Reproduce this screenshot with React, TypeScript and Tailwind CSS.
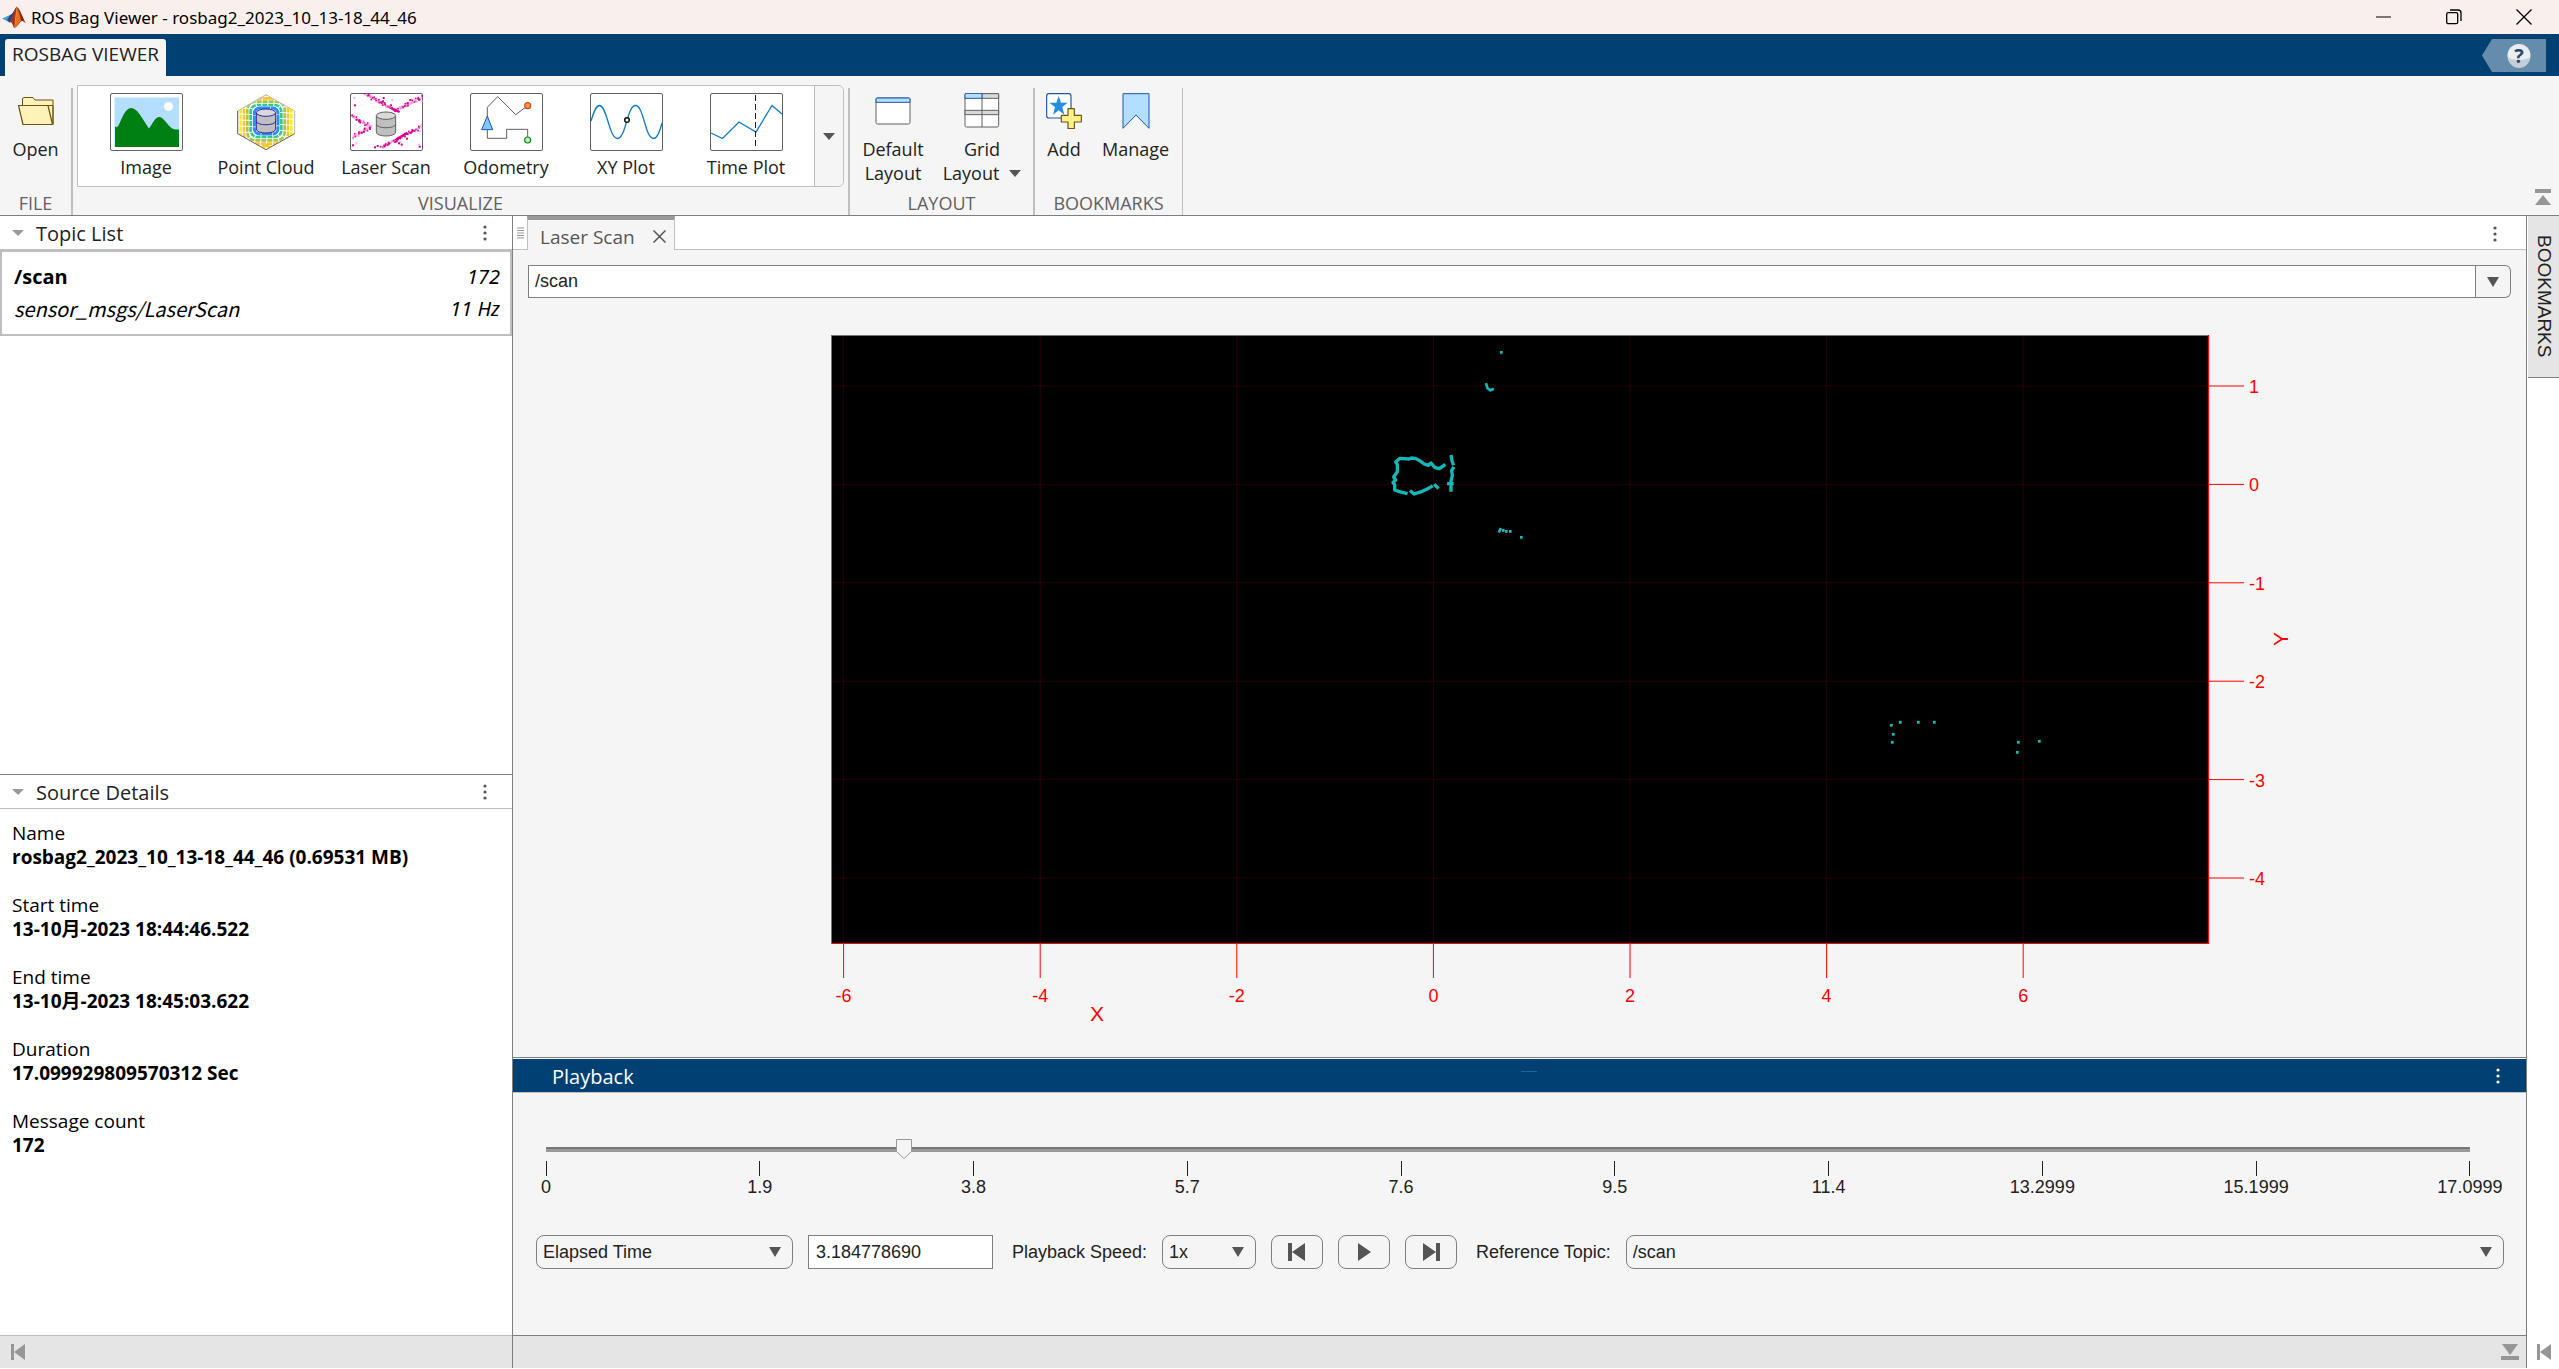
import React, { useState } from "react";

const GALLERY = [
  { label: "Image", Icon: ImageIcon },
  { label: "Point Cloud", Icon: PointCloudIcon },
  { label: "Laser Scan", Icon: LaserScanIcon },
  { label: "Odometry", Icon: OdometryIcon },
  { label: "XY Plot", Icon: XYPlotIcon },
  { label: "Time Plot", Icon: TimePlotIcon },
];

const DETAILS = [
  ["Name", "rosbag2_2023_10_13-18_44_46 (0.69531 MB)"],
  ["Start time", "13-10月-2023 18:44:46.522"],
  ["End time", "13-10月-2023 18:45:03.622"],
  ["Duration", "17.099929809570312 Sec"],
  ["Message count", "172"],
];

const TICKS = ["0", "1.9", "3.8", "5.7", "7.6", "9.5", "11.4", "13.2999", "15.1999", "17.0999"];
const DURATION = 17.0999;

// cheap repeatable noise for the scattered dots in the laser icon
const noise = (n: number) => {
  const v = Math.sin(n * 12.9898) * 43758.5453;
  return v - Math.floor(v);
};

function Frame({ x = 0, y = 0, w = 73, h = 58, sw = 1 }) {
  return (
    <rect
      x={x + sw / 2}
      y={y + sw / 2}
      width={w - sw}
      height={h - sw}
      rx={sw * 1.5}
      fill="#fff"
      stroke="#616161"
      strokeWidth={sw}
    />
  );
}

function ImageIcon() {
  return (
    <svg viewBox="0 0 73 58" className="h-[58px] w-[73px]">
      <Frame />
      <path d="M4.5 4.5h64.500v49.500h-64.500z" fill="#b3deff" />
      <circle cx="58.500" cy="13.500" r="4.600" fill="#fff" />
      <path
        d="M5 33c1.500 2 2.500 1.500 4-1.500C12 25 15.500 15 21 15c6.500 0 10.500 9.500 18 20.500C43 30 45 24 49.500 24c5 0 9.500 12.500 16 12.500H69V54H5z"
        fill="#007f12"
      />
    </svg>
  );
}

function Database({ cx, cy, stroke }: { cx: number; cy: number; stroke: string }) {
  const l = cx - 29;
  const r = cx + 29;
  const t = cy - 25;
  const b = cy + 24;
  return (
    <g stroke={stroke} strokeWidth="3">
      <path d={`M${l} ${t}V${b}C${l} ${b + 16} ${r} ${b + 16} ${r} ${b}V${t}`} fill="#bfbfbf" />
      <ellipse cx={cx} cy={t} rx="29" ry="11" fill="#d9d9d9" />
      <path d={`M${l} ${cy}C${l} ${cy + 15} ${r} ${cy + 15} ${r} ${cy}`} fill="none" />
    </g>
  );
}

function PointCloudIcon() {
  const rings = [
    { dx: 76, color: "#f7f01e" },
    { dx: 66, color: "#fdc13a" },
    { dx: 56, color: "#a8c83a" },
    { dx: 46, color: "#35c795" },
  ];
  const hex = "22,75 107,26 193,75 193,143 107,191 22,143";
  return (
    <svg viewBox="-1 21 219 174" className="h-[58px] w-[73px]">
      <clipPath id="hex">
        <polygon points={hex} />
      </clipPath>
      <polygon points={hex} fill="#fff" />
      <g clipPath="url(#hex)" fill="none" strokeWidth="8">
        {rings.map(({ dx, color }, i) => (
          <rect
            key={dx}
            x={107 - dx}
            y={105 - dx - 2}
            width={dx * 2}
            height={dx * 2 + 4}
            rx={20 + (3 - i) * 4}
            stroke={color}
            strokeDasharray="15 3"
            strokeDashoffset={i * 7}
          />
        ))}
        <path d="M97 37h20M97 178h20" stroke="#fdc13a" />
        <rect x="72" y="66" width="71" height="78" rx="16" stroke="#2b8cf5" strokeWidth="9" strokeDasharray="32 2" />
      </g>
      <path d="M22 143V75L107 26l86 49v68" fill="none" stroke="#b8b8b8" strokeWidth="3" />
      <path d="M22 75v68l85 48 86-48" fill="none" stroke="#616161" strokeWidth="3" />
      <Database cx={107} cy={105} stroke="#38219c" />
    </svg>
  );
}

function LaserScanIcon() {
  const walls = [
    [405, 26, 495, 74, 34],
    [495, 74, 572, 36, 26],
    [364, 92, 420, 122, 24],
    [420, 122, 364, 156, 22],
    [452, 184, 572, 122, 52],
  ];
  const stray = [
    [370, 36], [372, 58], [458, 36], [484, 42], [538, 42], [530, 52], [572, 46], [480, 58], [566, 182], [564, 176],
    [432, 184], [440, 180], [508, 168], [512, 176], [504, 172], [376, 172], [366, 178], [528, 158], [568, 136], [456, 46],
  ];
  return (
    <svg viewBox="357 21 219 174" className="h-[58px] w-[73px]">
      <Frame x={357} y={21} w={219} h={174} sw={3} />
      {walls.map(([x1, y1, x2, y2, n], w) => (
        <g key={w}>
          <path d={`M${x1} ${y1}L${x2} ${y2}`} stroke="#f08fd0" strokeWidth="6" strokeDasharray="9 3" />
          {Array.from({ length: n }, (_, i) => {
            const t = i / (n - 1);
            const s = w * 100 + i;
            return (
              <rect
                key={i}
                x={x1 + (x2 - x1) * t + (noise(s) - 0.5) * 8 - 3}
                y={y1 + (y2 - y1) * t + (noise(s + 0.5) - 0.5) * 12 - 3}
                width="5"
                height="5"
                fill={noise(s + 0.25) > 0.3 ? "#d8008c" : "#ffa3df"}
              />
            );
          })}
        </g>
      ))}
      <path d="M482 68l24 10M496 160l34-20" stroke="#d8008c" strokeWidth="7" />
      {stray.map(([x, y], i) => (
        <rect key={i} x={x - 3} y={y - 3} width="6" height="6" fill={i % 3 ? "#d8008c" : "#ffb3e6"} />
      ))}
      <Database cx={465} cy={114} stroke="#616161" />
    </svg>
  );
}

function OdometryIcon() {
  return (
    <svg viewBox="717 21 219 174" className="h-[58px] w-[73px]">
      <Frame x={717} y={21} w={219} h={174} sw={3} />
      <path d="M769 110V64l31-32 54 54 36-27M769 130v27h58v-27h63v24" fill="none" stroke="#616161" strokeWidth="3" />
      <path d="M769 90l16 41h-33z" fill="#80c8ff" stroke="#1a56a8" strokeWidth="3" />
      <circle cx="890" cy="59" r="9" fill="#ff9355" stroke="#d9480f" strokeWidth="3.500" />
      <circle cx="890" cy="162" r="9" fill="#b8f5b8" stroke="#12801a" strokeWidth="3.500" />
    </svg>
  );
}

function XYPlotIcon() {
  return (
    <svg viewBox="0 0 73 58" className="h-[58px] w-[73px]">
      <Frame />
      <path
        d="M1 28C4 18 6 12.500 9.500 12.500 17 12.500 19 45.500 27.500 45.500S37 12.500 45.500 12.500 55 45.500 63.500 45.500C67 45.500 70 38 72 30"
        fill="none"
        stroke="#0f7bc4"
        strokeWidth="1.300"
      />
      <circle cx="37" cy="27" r="2.300" fill="#fff" stroke="#111" strokeWidth="1.500" />
    </svg>
  );
}

function TimePlotIcon() {
  return (
    <svg viewBox="0 0 73 58" className="h-[58px] w-[73px]">
      <Frame />
      <path d="M1 40l11.500 5.500L29 29l17 10L62 12.500 72 21" fill="none" stroke="#0f7bc4" strokeWidth="1.300" />
      <path d="M45.500 2v54" stroke="#222" strokeDasharray="6 3" />
    </svg>
  );
}

function FolderIcon() {
  return (
    <svg viewBox="0 0 36 36" className="size-9" fill="#fff2b8" stroke="#6b5310" strokeLinejoin="round">
      <path d="M4.500 12V5.500l1.500-1h9l2 2.500h18v24.500h-3z" />
      <path d="M.500 12.500h29.500l4.500 19H5z" strokeWidth="1.200" />
      <path d="M30 12.500h5v19" fill="none" />
    </svg>
  );
}

function DefaultLayoutIcon() {
  return (
    <svg viewBox="43 21 108 108" className="size-9" strokeWidth="3">
      <rect x="46" y="36" width="102" height="78" rx="5" fill="#fff" stroke="#616161" />
      <path d="M46 49V39q0-3 3-3h96q3 0 3 3v10z" fill="#b3deff" stroke="#1a56a8" />
    </svg>
  );
}

function GridLayoutIcon() {
  return (
    <svg viewBox="307 21 108 108" className="size-9" strokeWidth="3">
      <rect x="310" y="22" width="101" height="101" rx="5" fill="#fff" stroke="#616161" />
      <path d="M361 23h50v14h-50zM310 73h101v13H310z" fill="#d9d9d9" stroke="#616161" />
      <path d="M361 37v86" stroke="#616161" />
      <path d="M310 37V25q0-3 3-3h48v15z" fill="#b3deff" stroke="#1a56a8" />
    </svg>
  );
}

function AddBookmarkIcon() {
  return (
    <svg viewBox="555 21 108 108" className="size-9" strokeWidth="3.500">
      <rect x="557" y="23" width="73" height="73" rx="7" fill="#fff" stroke="#1a56a8" />
      <path d="M593 30l7 20h20l-16 13 6 23-17-13-17 13 6-23-17-13h21z" fill="#268ce0" />
      <path d="M621 68h19v20h21v20h-21v20h-19v-20h-20V88h20z" fill="#fff08c" stroke="#6b5310" strokeLinejoin="round" />
    </svg>
  );
}

function ManageIcon() {
  return (
    <svg viewBox="768 21 108 108" className="size-9">
      <path d="M783 23h78v104l-39-40-39 40z" fill="#b3deff" stroke="#1a56a8" strokeWidth="3" />
    </svg>
  );
}

function MatlabLogo() {
  return (
    <svg viewBox="0 0 24 24" className="size-6" aria-hidden="true">
      <path d="M0 13.500L8 10l4 3.500-4.500 4z" fill="#4a9fd8" />
      <path d="M8 10c3-1 4-5 6.500-8L12 14l-4.500 3.500L5 15z" fill="#1d4f86" />
      <path d="M14.500 1.500C12 5 11 12 7.500 17.500c2.500-1 3 2 4.500 5.500 4-1 6-7 8-7z" fill="#a8301a" />
      <path d="M14.500 1.500C13.500 8 13 16 12 23c3-1 5-6 7-7 2-.500 3 .500 5 2.500C20 12 17.500 2.500 14.500 1.500z" fill="#e2701c" />
      <path d="M15 2.500c2 4 3.500 9 4 13.500 1.500-.500 3 .500 5 2.500C20 12 18 3.500 15 2.500z" fill="#8f1f12" />
      <path d="M14.500 2c-.500 7-1 13-1.500 18 1-4 1.500-12 1.500-18z" fill="#fbc36a" />
    </svg>
  );
}

function Caret({ className = "h-[7px] w-3" }) {
  return (
    <svg viewBox="0 0 12 10" preserveAspectRatio="none" className={className} aria-hidden="true">
      <path d="M0 0h12L6 10z" fill="currentColor" />
    </svg>
  );
}

function Kebab({ label, className = "text-[#555]" }: { label: string; className?: string }) {
  return (
    <button type="button" aria-label={label} className={`flex h-6 w-4 items-center justify-center ${className}`}>
      <svg viewBox="0 0 4 16" className="h-4 w-1" fill="currentColor">
        <circle cx="2" cy="2" r="1.600" />
        <circle cx="2" cy="8" r="1.600" />
        <circle cx="2" cy="14" r="1.600" />
      </svg>
    </button>
  );
}

// bar + triangle, used for every "collapse towards this edge" button
function Collapse({ label, dir }: { label: string; dir: "up" | "down" | "left" }) {
  const d = {
    up: "M0 0h16v4H0zM8 6l8 10H0z",
    down: "M0 12h18v4H0zM1 0h16L9 11z",
    left: "M0 0h3v16H0zM3 8L14 0v16z",
  }[dir];
  return (
    <button type="button" aria-label={label} className="text-[#969696]">
      <svg viewBox="0 0 18 16" className="h-4 w-[18px]" fill="currentColor">
        <path d={d} />
      </svg>
    </button>
  );
}

function TitleBar() {
  return (
    <header className="flex h-[34px] shrink-0 items-center bg-[#f9f0ed] pl-[2px] text-black">
      <MatlabLogo />
      <h1 className="ml-[5px] flex-1 pt-px font-['Noto_Sans',sans-serif] text-[17px]">
        ROS Bag Viewer - rosbag2_2023_10_13-18_44_46
      </h1>
      <button type="button" aria-label="Minimize" className="flex w-[70px] justify-center">
        <svg viewBox="0 0 16 16" className="size-4">
          <path d="M0 8h15" stroke="#000" />
        </svg>
      </button>
      <button type="button" aria-label="Restore" className="flex w-[70px] justify-center">
        <svg viewBox="0 0 16 16" className="size-4" fill="none" stroke="#000" strokeWidth="1.300">
          <rect x=".7" y="3.700" width="11" height="11" rx="1.500" />
          <path d="M4 1h8q3 0 3 3v8" />
        </svg>
      </button>
      <button type="button" aria-label="Close" className="flex w-[70px] justify-center">
        <svg viewBox="0 0 16 16" className="size-4">
          <path d="M.500 .500l15 15M15.500 .500l-15 15" stroke="#000" strokeWidth="1.300" />
        </svg>
      </button>
    </header>
  );
}

function TabStrip() {
  return (
    <nav className="flex h-[42px] shrink-0 items-end justify-between bg-[#004073] pl-[5px] pr-[13px]">
      <button type="button" className="h-[37px] rounded-t-[3px] bg-[#f5f5f5] px-[7px] pb-[6px] text-[19px] text-[#222]">
        ROSBAG VIEWER
      </button>
      <button type="button" aria-label="Help" className="mb-1">
        <svg viewBox="0 0 64 33" className="h-[33px] w-16">
          <path d="M0 16.500L10 0h54v33H10z" fill="#668cab" />
          <circle cx="37" cy="16.500" r="11.500" fill="#e9eef3" />
          <path d="M26 18a11 11 0 0 0 22 0c-4 4-18 4-22 0z" fill="#c3ced8" />
          <text x="37" y="24" textAnchor="middle" fontSize="20" fontWeight="700" fill="#2f4b66">
            ?
          </text>
        </svg>
      </button>
    </nav>
  );
}

function SectionTitle({ children }: { children: React.ReactNode }) {
  return <h2 className="h-6 text-center leading-6 text-[#616161]">{children}</h2>;
}

function ToolButton({ icon, className, children }: { icon: React.ReactNode; className: string; children: React.ReactNode }) {
  return (
    <button type="button" className={`flex flex-col items-center leading-6 ${className}`}>
      {icon}
      <span className="mt-2 block">{children}</span>
    </button>
  );
}

function Toolstrip() {
  return (
    <div className="flex h-[140px] shrink-0 border-b border-[#7f7f7f] bg-[#f5f5f5] text-[18px] text-[#222]">
      <section className="flex w-[71px] flex-col">
        <div className="flex flex-1 items-start justify-center pt-[17px]">
          <ToolButton icon={<FolderIcon />} className="w-14">
            Open
          </ToolButton>
        </div>
        <SectionTitle>FILE</SectionTitle>
      </section>
      <div className="mt-3 w-[2px] bg-[#bfbfbf]" />

      <section className="flex flex-col px-1 pt-[9px]">
        <div className="flex h-[102px] rounded-r-md border border-[#bfbfbf] bg-white">
          <div className="flex px-2">
            {GALLERY.map(({ label, Icon }) => (
              <button key={label} type="button" className="flex w-[120px] flex-col items-center gap-1 pt-[7px] leading-6">
                <Icon />
                {label}
              </button>
            ))}
          </div>
          <button
            type="button"
            aria-label="More plots"
            className="flex w-[29px] items-center justify-center rounded-r-md border-l border-[#bfbfbf] bg-[#f5f5f5] text-[#555]"
          >
            <Caret />
          </button>
        </div>
        <div className="flex-1" />
        <SectionTitle>VISUALIZE</SectionTitle>
      </section>
      <div className="mt-3 w-[2px] bg-[#bfbfbf]" />

      <section className="flex flex-col">
        <div className="flex flex-1 items-start gap-[19px] px-3 pt-[17px]">
          <ToolButton icon={<DefaultLayoutIcon />} className="w-[62px]">
            Default Layout
          </ToolButton>
          <ToolButton icon={<GridLayoutIcon />} className="w-[78px]">
            Grid
            <span className="flex items-center gap-[10px]">
              Layout <Caret className="h-[7px] w-3 text-[#555]" />
            </span>
          </ToolButton>
        </div>
        <SectionTitle>LAYOUT</SectionTitle>
      </section>
      <div className="mt-3 w-[2px] bg-[#bfbfbf]" />

      <section className="flex flex-col">
        <div className="flex flex-1 items-start gap-[19px] pl-[11px] pr-3 pt-[17px]">
          <ToolButton icon={<AddBookmarkIcon />} className="w-9">
            Add
          </ToolButton>
          <ToolButton icon={<ManageIcon />} className="w-[69px]">
            Manage
          </ToolButton>
        </div>
        <SectionTitle>BOOKMARKS</SectionTitle>
      </section>
      <div className="mt-3 w-px bg-[#bfbfbf]" />

      <div className="ml-auto self-end pb-[3px] pr-[6px]">
        <Collapse label="Collapse toolstrip" dir="up" />
      </div>
    </div>
  );
}

function PanelHeader({ title }: { title: string }) {
  return (
    <div className="flex h-[34px] shrink-0 items-center border-b border-[#bfbfbf] pl-3 pr-[19px]">
      <Caret className="h-[6px] w-3 text-[#999]" />
      <h2 className="ml-3 flex-1 pt-[2px] text-[20px] text-[#222]">{title}</h2>
      <Kebab label={`${title} options`} />
    </div>
  );
}

function Sidebar() {
  return (
    <aside className="flex w-[513px] shrink-0 flex-col border-r border-[#7f7f7f] bg-white">
      <section className="min-h-0 flex-1">
        <PanelHeader title="Topic List" />
        <button
          type="button"
          className="grid w-full grid-cols-[1fr_auto] border-2 border-[#bfbfbf] pb-[9px] pl-3 pr-[10px] pt-[9px] text-left text-[20px] leading-8 text-black"
        >
          <span className="font-bold">/scan</span>
          <span className="text-right font-['Noto_Sans',sans-serif] italic">172</span>
          <span className="font-['Noto_Sans_CJK_SC',sans-serif] italic">sensor_msgs/LaserScan</span>
          <span className="text-right font-['Noto_Sans',sans-serif] italic">11 Hz</span>
        </button>
      </section>

      <section className="h-[561px] shrink-0 border-t border-[#7f7f7f]">
        <PanelHeader title="Source Details" />
        <dl className="flex flex-col gap-6 px-3 pt-3 text-[19px] leading-6 text-black">
          {DETAILS.map(([term, value]) => (
            <div key={term}>
              <dt>{term}</dt>
              <dd className="font-bold">{value}</dd>
            </div>
          ))}
        </dl>
      </section>

      <div className="flex h-[33px] shrink-0 items-center border-t border-[#bfbfbf] bg-[#e5e5e5] pl-[11px]">
        <Collapse label="Collapse left panel" dir="left" />
      </div>
    </aside>
  );
}

const px = (v: number) => 920.4 + 98.3 * v;
const py = (v: number) => 176.4 - 98.4 * v;

const FAR_POINTS = [
  [1378.3, 417.3], [1387.3, 414.3], [1405.3, 414.3], [1421.3, 414.3], [1380.3, 426.3],
  [1379.3, 434.3], [1505.3, 434.3], [1526.3, 433.3], [1504.3, 444.3],
];

function ScanPlot() {
  return (
    <svg
      viewBox="0 0 2013 749"
      className="mt-[10px] min-h-0 w-full flex-1 font-['Liberation_Sans',Arial,sans-serif]"
      role="img"
      aria-label="Laser scan plot"
    >
      <rect x="318.500" y="27.500" width="1377" height="608" fill="#000" stroke="#777" />
      <g stroke="#2b0000">
        {[-6, -4, -2, 0, 2, 4, 6].map((v) => (
          <path key={v} d={`M${px(v)} 28V635`} />
        ))}
        {[1, 0, -1, -2, -3, -4].map((v) => (
          <path key={v} d={`M319 ${py(v)}H1695`} />
        ))}
      </g>
      <path d="M319 635.500H1695.500V27" fill="none" stroke="#f00" strokeWidth="1.200" />
      <g fill="#f00" fontSize="18">
        {[-6, -4, -2, 0, 2, 4, 6].map((v) => (
          <g key={v}>
            <path d={`M${px(v)} 636V670`} stroke="#f00" />
            <text x={px(v)} y="694" textAnchor="middle">
              {v}
            </text>
          </g>
        ))}
        {[1, 0, -1, -2, -3, -4].map((v) => (
          <g key={v}>
            <path d={`M1696 ${py(v)}H1731`} stroke="#f00" />
            <text x="1736" y={py(v) + 7}>
              {v}
            </text>
          </g>
        ))}
      </g>
      <g fill="#f00" fontSize="21">
        <text x="584" y="713" textAnchor="middle">
          X
        </text>
        <text transform="translate(1775 331) rotate(-90)" textAnchor="middle">
          Y
        </text>
      </g>
      <g
        transform="translate(847 22) scale(.3333)"
        fill="none"
        stroke="#14b8b8"
        strokeWidth="10"
        strokeLinejoin="round"
        strokeLinecap="square"
      >
        <path d="M252 406L238 416L225 413L213 399L205 406L193 402L182 394L168 386L154 384L147 387L120 385L107 396L112 404V425L101 441L107 450L99 458L104 464V480L118 485L138 490" />
        <path d="M154 485L162 492L178 487M187 484L200 478L214 470M226 466L232 472" />
        <path d="M274 380L276 392L279 401M279 415L275 422L277 436L273 454V480M266 461H276" />
        <path d="M379 163L382 174L391 181L398 178" strokeWidth="8" />
        <path d="M418 604L421 598M430 601h.1M439 604h.1M451 604h.1M484 622h.1M424 67h.1" strokeWidth="8" />
      </g>
      {FAR_POINTS.map(([x, y]) => (
        <rect key={`${x},${y}`} x={x - 1.4} y={y - 1.4} width="2.800" height="2.800" fill="#14b8b8" />
      ))}
    </svg>
  );
}

function Select({ id, label, options, className }: { id: string; label?: string; options: string[]; className: string }) {
  return (
    <div className={`relative ${className}`}>
      <select
        id={id}
        aria-label={label}
        className="h-[34px] w-full appearance-none rounded-lg border border-[#7f7f7f] bg-[#f5f5f5] pl-[6px] text-[18px] text-[#222]"
      >
        {options.map((o) => (
          <option key={o}>{o}</option>
        ))}
      </select>
      <Caret className="pointer-events-none absolute right-3 top-3 h-[10px] w-3 text-[#555]" />
    </div>
  );
}

function StepButton({ label, d }: { label: string; d: string }) {
  return (
    <button
      type="button"
      aria-label={label}
      className="flex h-[34px] w-[52px] items-center justify-center rounded-lg border border-[#7f7f7f]"
    >
      <svg viewBox="0 0 18 18" className="size-[18px]" fill="#555">
        <path d={d} />
      </svg>
    </button>
  );
}

function Playback() {
  const [time, setTime] = useState(3.18477869);
  return (
    <section className="shrink-0 border-t border-[#7f7f7f] pt-px">
      <div className="flex h-[34px] items-center border-b border-[#bfbfbf] bg-[#004073] pl-[39px] pr-5 text-white">
        <h2 className="flex-1 pt-[2px] text-[20px]">Playback</h2>
        <div className="mb-2 h-px w-4 bg-[#2c6491]" />
        <div className="flex flex-1 justify-end">
          <Kebab label="Playback options" className="text-white" />
        </div>
      </div>
      <div className="h-[242px] pt-[46px] font-['Liberation_Sans',Arial,sans-serif] text-[18px] text-[#222]">
        <div className="ml-[33px] mr-14">
          <div className="relative flex h-5 items-center">
            <div className="h-[5px] w-full border-t-2 border-[#777] bg-[#999]" />
            <svg
              viewBox="0 0 16 20"
              className="absolute h-5 w-4 -translate-x-1/2"
              style={{ left: `${(time / DURATION) * 100}%` }}
            >
              <path d="M.500 .500h15v12L8 19.500.500 12.500z" fill="#f5f5f5" stroke="#999" />
            </svg>
            <input
              type="range"
              aria-label="Playback position"
              min={0}
              max={DURATION}
              step="any"
              value={time}
              onChange={(e) => setTime(Number(e.target.value))}
              className="absolute inset-0 w-full opacity-0"
            />
          </div>
          <div className="mt-[2px] flex justify-between">
            {TICKS.map((t) => (
              <div key={t} className="flex w-0 flex-col items-center">
                <div className="h-[15px] w-px bg-[#222]" />
                <span className="leading-[22px]">{t}</span>
              </div>
            ))}
          </div>
        </div>

        <div className="mt-[37px] flex items-center gap-[15px] pl-[23px] pr-[22px]">
          <Select id="time-mode" label="Time format" options={["Elapsed Time"]} className="w-[257px]" />
          <input
            type="text"
            aria-label="Current time"
            value={time.toFixed(9)}
            onChange={(e) => setTime(Number(e.target.value) || 0)}
            className="h-[34px] w-[185px] border border-[#7f7f7f] bg-white px-[7px]"
          />
          <label htmlFor="speed" className="pl-1">
            Playback Speed:
          </label>
          <Select id="speed" options={["1x"]} className="w-[94px]" />
          <StepButton label="Previous message" d="M0 0h4v18H0zM4 9L17 0v18z" />
          <StepButton label="Play" d="M3 0l13 9-13 9z" />
          <StepButton label="Next message" d="M14 0h4v18h-4zM14 9L1 0v18z" />
          <label htmlFor="reference" className="pl-1">
            Reference Topic:
          </label>
          <Select id="reference" options={["/scan"]} className="flex-1" />
        </div>
      </div>
    </section>
  );
}

function DocumentArea() {
  return (
    <main className="flex min-w-0 flex-1 flex-col border-r border-[#7f7f7f] bg-[#f5f5f5]">
      <div className="flex h-[34px] shrink-0 border-b border-[#bfbfbf] bg-white">
        <div className="flex w-[14px] items-center justify-center">
          <svg viewBox="0 0 7 12" className="h-3 w-[7px]" stroke="#999">
            <path d="M0 1h7M0 3.500h7M0 6h7M0 8.500h7M0 11h7" />
          </svg>
        </div>
        <div className="-mb-px flex w-[148px] items-center border-x border-t-4 border-x-[#bfbfbf] border-t-[#999] bg-[#f5f5f5] pl-3 text-[#555]">
          <button type="button" className="pt-1 text-[19px]">
            Laser Scan
          </button>
          <button type="button" aria-label="Close tab" className="ml-[18px] pt-[2px]">
            <svg viewBox="0 0 13 13" className="size-[13px]" stroke="currentColor" strokeWidth="1.500">
              <path d="M.500 .500l12 12M12.500 .500l-12 12" />
            </svg>
          </button>
        </div>
        <div className="ml-auto flex items-center pr-[23px] pt-[2px]">
          <Kebab label="Document options" />
        </div>
      </div>

      <div className="mx-[15px] mt-[15px] flex h-[33px] shrink-0 font-['Liberation_Sans',Arial,sans-serif] text-[18px] text-[#222]">
        <input
          type="text"
          aria-label="Topic"
          defaultValue="/scan"
          className="min-w-0 flex-1 border border-[#7f7f7f] bg-white px-[6px] pb-px"
        />
        <button
          type="button"
          aria-label="Choose topic"
          className="flex w-[35px] items-center justify-center rounded-r-md border border-l-0 border-[#7f7f7f] text-[#555]"
        >
          <Caret className="h-[10px] w-3" />
        </button>
      </div>

      <ScanPlot />
      <Playback />

      <div className="flex h-[33px] shrink-0 items-center justify-end border-t border-[#7f7f7f] bg-[#e5e5e5] pr-[7px]">
        <Collapse label="Collapse bottom panel" dir="down" />
      </div>
    </main>
  );
}

export default function App() {
  return (
    <div className="flex h-screen flex-col overflow-hidden border-b border-white bg-white font-['Open_Sans','Noto_Sans_CJK_SC',sans-serif]">
      <TitleBar />
      <TabStrip />
      <Toolstrip />
      <div className="flex min-h-0 flex-1">
        <Sidebar />
        <DocumentArea />
        <aside className="flex w-8 shrink-0 flex-col justify-between bg-white">
          <button
            type="button"
            className="ml-px flex h-[162px] items-center justify-center border-b border-[#7f7f7f] bg-[#e5e5e5] font-['Liberation_Sans',Arial,sans-serif] text-[19px] text-[#222] [writing-mode:vertical-rl]"
          >
            BOOKMARKS
          </button>
          <div className="flex pb-2 pl-[10px]">
            <Collapse label="Collapse right panel" dir="left" />
          </div>
        </aside>
      </div>
    </div>
  );
}
